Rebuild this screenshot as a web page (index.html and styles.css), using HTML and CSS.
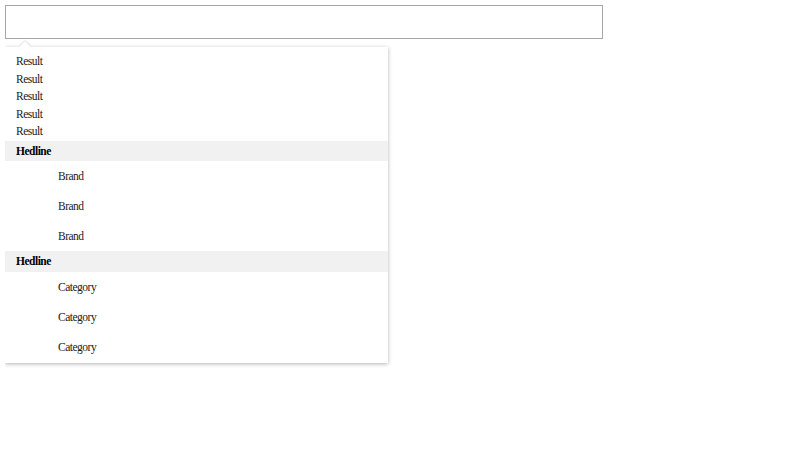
FILE: index.html
```html
<!DOCTYPE html>
<html lang="en">
<head>
    <meta charset="UTF-8">
    <title>Autocomplete</title>
    <link rel="stylesheet" href="styles.css">
</head>
<body>
    <input class="search-input" type="text">

    <div class="suggest">
        <ul class="suggest-results">
            <li>Result</li>
            <li>Result</li>
            <li>Result</li>
            <li>Result</li>
            <li>Result</li>
        </ul>

        <div class="suggest-headline">Hedline</div>
        <ul class="suggest-group">
            <li>Brand</li>
            <li>Brand</li>
            <li>Brand</li>
        </ul>

        <div class="suggest-headline">Hedline</div>
        <ul class="suggest-group">
            <li>Category</li>
            <li>Category</li>
            <li>Category</li>
        </ul>
    </div>
</body>
</html>
```

FILE: styles.css
```css
html {
    min-height: 100%;
    background: #fff;
}

body {
    margin: 5px;
    min-height: 420px;
    font-family: 'Liberation Serif', 'Times New Roman', serif;
    font-size: 11.5px;
    letter-spacing: -0.5px;
    color: #1a1a1a;
}

.search-input {
    display: block;
    box-sizing: border-box;
    width: 598px;
    height: 34px;
    margin: 0;
    border: 1px solid #a6a6a6;
    background: #fff;
}

/* dropdown */
.suggest {
    position: relative;
    width: 383px;
    margin-top: 8px;
    margin-bottom: 12px;
    padding-top: 6px;
    padding-bottom: 1px;
    background: #fff;
    box-shadow: 0 1px 4px rgba(0, 0, 0, 0.3);
}

/* little arrow pointing at the input */
.suggest::before {
    content: "";
    position: absolute;
    top: -4px;
    left: 16px;
    width: 8px;
    height: 8px;
    background: #fff;
    transform: rotate(45deg);
    box-shadow: -1px -1px 2px rgba(0, 0, 0, 0.12);
}

.suggest ul {
    list-style: none;
    margin: 0;
    padding: 0;
    position: relative;
}

.suggest-results li {
    height: 17.5px;
    line-height: 17.5px;
    padding-left: 11px;
}

.suggest-headline {
    position: relative;
    height: 20.5px;
    line-height: 20.5px;
    padding-left: 11px;
    background: #f1f1f1;
    font-weight: bold;
    color: #000;
}

.suggest-group li {
    height: 30px;
    line-height: 30px;
    padding-left: 53px;
}
```
